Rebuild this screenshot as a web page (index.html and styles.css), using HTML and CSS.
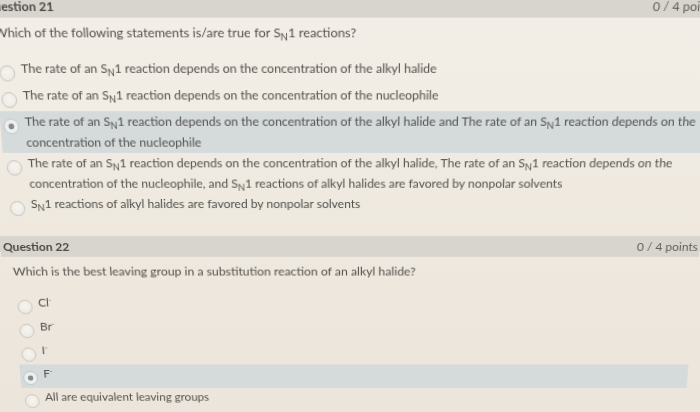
FILE: index.html
```html
<!DOCTYPE html>
<html lang="en">
<head>
<meta charset="utf-8">
<title>Quiz</title>
<link rel="stylesheet" href="styles.css">
</head>
<body>
<div class="sheet">
  <section class="question">
    <header class="q-head"><span class="q-title">Question 21</span><span class="q-score">0 / 4 points</span></header>
    <p class="q-text">Which of the following statements is/are true for S<sub>N</sub>1 reactions?</p>
    <ul class="choices">
      <li class="choice"><span class="radio"></span><span class="label">The rate of an S<sub>N</sub>1 reaction depends on the concentration of the alkyl halide</span></li>
      <li class="choice"><span class="radio"></span><span class="label">The rate of an S<sub>N</sub>1 reaction depends on the concentration of the nucleophile</span></li>
      <li class="choice selected"><span class="radio"></span><span class="label">The rate of an S<sub>N</sub>1 reaction depends on the concentration of the alkyl halide and The rate of an S<sub>N</sub>1 reaction depends on the concentration of the nucleophile</span></li>
      <li class="choice"><span class="radio"></span><span class="label">The rate of an S<sub>N</sub>1 reaction depends on the concentration of the alkyl halide, The rate of an S<sub>N</sub>1 reaction depends on the concentration of the nucleophile, and S<sub>N</sub>1 reactions of alkyl halides are favored by nonpolar solvents</span></li>
      <li class="choice"><span class="radio"></span><span class="label">S<sub>N</sub>1 reactions of alkyl halides are favored by nonpolar solvents</span></li>
    </ul>
  </section>
  <section class="question next">
    <header class="q-head"><span class="q-title">Question 22</span><span class="q-score">0 / 4 points</span></header>
    <p class="q-text">Which is the best leaving group in a substitution reaction of an alkyl halide?</p>
    <ul class="choices">
      <li class="choice"><span class="radio"></span><span class="label">Cl<sup class="charge">-</sup></span></li>
      <li class="choice"><span class="radio"></span><span class="label">Br<sup class="charge">-</sup></span></li>
      <li class="choice"><span class="radio"></span><span class="label">I<sup class="charge">-</sup></span></li>
      <li class="choice selected"><span class="radio"></span><span class="label">F<sup class="charge">-</sup></span></li>
      <li class="choice"><span class="radio"></span><span class="label">All are equivalent leaving groups</span></li>
    </ul>
  </section>
</div>
</body>
</html>
```

FILE: styles.css
```css
html, body {
  margin: 0;
  height: 100%;
}

body {
  overflow: hidden;
  background: linear-gradient(#f3efe8, #eee8de 60%, #ebe5db);
  font-family: Lato, "Noto Sans", sans-serif;
  font-size: 12px;
  color: #52504d;
}

/* flat page; the transform imitates the photo's keystone */
.sheet {
  width: 700px;
  min-height: 440px;
  padding-top: 6px;
  box-sizing: border-box;
  transform-origin: 351px 246px;
  transform: perspective(600px) rotateX(-7.9deg);
}

.q-head {
  display: flex;
  justify-content: space-between;
  align-items: center;
  height: 21px;
  padding: 0 2px 0 3px;
  background: #d8d5cf;
  font-weight: 700;
  color: #4a4845;
}

.q-score {
  font-weight: 400;
  color: #625f5a;
}

.q-text {
  margin: 4px 0 0 11px;
  line-height: 20px;
  font-size: 12.3px;
}

.choices {
  list-style: none;
  margin: 13px 2px 0 10px;
  padding: 0;
}

.next {
  margin-top: 17px;
}

.next .q-text {
  margin-top: 5px;
}

.next .choices {
  margin-top: 12px;
}

.choice {
  display: flex;
  align-items: flex-start;
  gap: 6px;
  padding-left: 3px;
}

.radio {
  flex: none;
  width: 15px;
  height: 15px;
  margin: 7px 0 3px;
  border-radius: 50%;
  border: 1px solid #c6c2bb;
  box-sizing: border-box;
  background: radial-gradient(circle at 50% 40%, #f7f5f1, #ebe7e0);
}

.label {
  line-height: 20px;
}

.selected {
  background: #d5dadb;
}

.selected .radio {
  border-color: #c1c5c6;
  background: radial-gradient(circle, #878a8c 0 2.5px, #eef0f0 3.2px);
}

sub {
  font-size: 0.75em;
  vertical-align: -0.3em;
  line-height: 0;
}

.charge {
  font-size: 0.6em;
  vertical-align: 0.6em;
  line-height: 0;
}
```
